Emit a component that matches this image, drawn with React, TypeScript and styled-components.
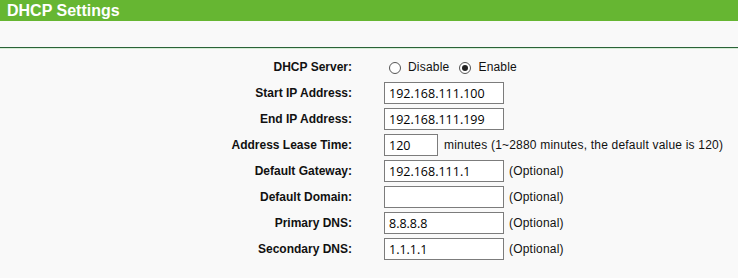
import React from "react";
import styled, { createGlobalStyle } from "styled-components";

const Global = createGlobalStyle`
  html, body { margin: 0; padding: 0; background: #f9f9f9; }
  body { font-family: "Liberation Sans", Arial, sans-serif; font-size: 12px; color: #000; }
`;

const Page = styled.div`
  width: 738px;
  height: 278px;
  background: #f9f9f9;
  overflow: hidden;
`;

const Header = styled.div`
  height: 21px;
  background: #66b632;
  color: #ffffff;
  font: bold 16px/21px "Liberation Sans", Arial, sans-serif;
  padding-left: 7px;
`;

const Divider = styled.div`
  margin-top: 26px;
  height: 1px;
  background: #2a6338;
  border-bottom: 1px solid #d6ecd6;
`;

const Form = styled.div`
  margin-top: 5px;
  display: grid;
  grid-template-columns: 352px auto;
  grid-auto-rows: 26px;
  column-gap: 32px;
  align-items: center;
`;

const Label = styled.div`
  text-align: right;
  font: bold 12px "Liberation Sans", Arial, sans-serif;
  color: #111;
`;

const Field = styled.div`
  display: flex;
  align-items: center;
`;

const TextInput = styled.input<{ $w?: number }>`
  box-sizing: border-box;
  width: ${(p) => p.$w ?? 120}px;
  height: 22px;
  margin: 0;
  padding: 1px 4px 0;
  border: 1px solid #7c7c7c;
  border-radius: 0;
  background: #fff;
  font: 12.5px "Open Sans", "Segoe UI", sans-serif;
  color: #000;
  outline: none;
`;

const Note = styled.span<{ $gap?: number }>`
  margin-left: ${(p) => p.$gap ?? 5}px;
  font: 12px "Liberation Sans", Arial, sans-serif;
  letter-spacing: 0.2px;
  color: #111;
  white-space: nowrap;
`;

const RadioGroup = styled.label<{ $first?: boolean }>`
  display: flex;
  align-items: center;
  font: 12px "Liberation Sans", Arial, sans-serif;
  letter-spacing: 0.2px;
  color: #111;
  margin-left: ${(p) => (p.$first ? 5 : 10)}px;
`;

const Radio = styled.input`
  appearance: none;
  -webkit-appearance: none;
  box-sizing: border-box;
  width: 12px;
  height: 12px;
  margin: 2px 7px 0 0;
  border: 1px solid #555;
  border-radius: 50%;
  background: #fff;
  display: grid;
  place-items: center;
  &:checked::after {
    content: "";
    width: 6px;
    height: 6px;
    border-radius: 50%;
    background: #222;
  }
`;

const rows: { label: string; value: string; note?: string; w?: number; gap?: number }[] = [
  { label: "Start IP Address:", value: "192.168.111.100" },
  { label: "End IP Address:", value: "192.168.111.199" },
  {
    label: "Address Lease Time:",
    value: "120",
    w: 54,
    gap: 6,
    note: "minutes (1~2880 minutes, the default value is 120)",
  },
  { label: "Default Gateway:", value: "192.168.111.1", note: "(Optional)" },
  { label: "Default Domain:", value: "", note: "(Optional)" },
  { label: "Primary DNS:", value: "8.8.8.8", note: "(Optional)" },
  { label: "Secondary DNS:", value: "1.1.1.1", note: "(Optional)" },
];

export default function App() {
  return (
    <Page>
      <Global />
      <Header>DHCP Settings</Header>
      <Divider />
      <Form>
        <Label>DHCP Server:</Label>
        <Field>
          <RadioGroup $first>
            <Radio type="radio" name="dhcp" />
            Disable
          </RadioGroup>
          <RadioGroup>
            <Radio type="radio" name="dhcp" defaultChecked />
            Enable
          </RadioGroup>
        </Field>
        {rows.map((r) => (
          <React.Fragment key={r.label}>
            <Label>{r.label}</Label>
            <Field>
              <TextInput $w={r.w} defaultValue={r.value} />
              {r.note && <Note $gap={r.gap}>{r.note}</Note>}
            </Field>
          </React.Fragment>
        ))}
      </Form>
    </Page>
  );
}
